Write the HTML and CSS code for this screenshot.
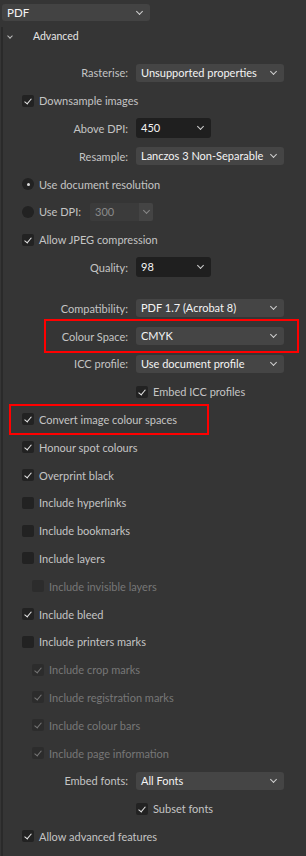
FILE: index.html
```html
<!DOCTYPE html>
<html>
<head>
  <meta charset="utf-8" />
  <title>PDF export - Advanced</title>
  <link rel="stylesheet" href="styles.css">
</head>
<body>
  <div class="top">
    <div class="select wide">PDF<span class="chev"></span></div>
  </div>

  <div class="panel">
    <div class="section-head"><span class="chev small"></span>Advanced</div>

    <div class="group">
      <div class="row field"><span class="label">Rasterise:</span><div class="select">Unsupported properties<span class="chev"></span></div></div>
      <div class="row check"><span class="box on"></span>Downsample images</div>
      <div class="row field"><span class="label">Above DPI:</span><div class="select dark">450<span class="chev"></span></div></div>
      <div class="row field"><span class="label">Resample:</span><div class="select">Lanczos 3 Non-Separable<span class="chev"></span></div></div>
      <div class="row check"><span class="radio on"></span>Use document resolution</div>
      <div class="row check"><span class="radio"></span>Use DPI:<div class="spin"><span class="spin-val">300</span><span class="spin-btn"><span class="chev"></span></span></div></div>
      <div class="row check"><span class="box on"></span>Allow JPEG compression</div>
      <div class="row field"><span class="label">Quality:</span><div class="select dark">98<span class="chev"></span></div></div>
    </div>

    <div class="group spaced">
      <div class="row field"><span class="label">Compatibility:</span><div class="select">PDF 1.7 (Acrobat 8)<span class="chev"></span></div></div>
      <div class="row field marked mark-space"><span class="label">Colour Space:</span><div class="select">CMYK<span class="chev"></span></div></div>
      <div class="row field"><span class="label">ICC profile:</span><div class="select">Use document profile<span class="chev"></span></div></div>
      <div class="row check sub-field"><span class="box on"></span>Embed ICC profiles</div>
      <div class="row check marked mark-convert"><span class="box on"></span>Convert image colour spaces</div>
      <div class="row check"><span class="box on"></span>Honour spot colours</div>
      <div class="row check"><span class="box on"></span>Overprint black</div>
      <div class="row check"><span class="box"></span>Include hyperlinks</div>
      <div class="row check"><span class="box"></span>Include bookmarks</div>
      <div class="row check"><span class="box"></span>Include layers</div>
      <div class="row check indent off"><span class="box"></span>Include invisible layers</div>
      <div class="row check"><span class="box on"></span>Include bleed</div>
      <div class="row check"><span class="box"></span>Include printers marks</div>
      <div class="row check indent off"><span class="box on"></span>Include crop marks</div>
      <div class="row check indent off"><span class="box on"></span>Include registration marks</div>
      <div class="row check indent off"><span class="box on"></span>Include colour bars</div>
      <div class="row check indent off"><span class="box on"></span>Include page information</div>
      <div class="row field"><span class="label">Embed fonts:</span><div class="select">All Fonts<span class="chev"></span></div></div>
      <div class="row check sub-field"><span class="box on"></span>Subset fonts</div>
      <div class="row check"><span class="box on"></span>Allow advanced features</div>
    </div>
  </div>
</body>
</html>
```

FILE: styles.css
```css
body {
  margin: 0;
  background-color: #353535;
  color: #c4c4c4;
  font-family: Lato, "Noto Sans", sans-serif;
  font-size: 11px;
  height: 856px;
  overflow: hidden;
}

.top {
  height: 26px;
  padding: 4px 0 0 2px;
  box-sizing: border-box;
}

.top .select {
  font-size: 11.5px;
}

.panel {
  border-left: 2px solid #2a2a2a;
  margin-left: 1px;
  height: 830px;
}

.section-head {
  height: 18px;
  display: flex;
  align-items: center;
  color: #e6e6e6;
  font-size: 10.5px;
  margin-top: 1px;
}

.section-head .chev {
  position: static;
  margin: 0 21px 0 5px;
}

.group {
  margin-top: 14px;
}

.group.spaced {
  margin-top: 13px;
}

.row {
  height: 27.8px;
  display: flex;
  align-items: center;
  position: relative;
}

.field .label {
  width: 125px;
  text-align: right;
  margin-right: 8px;
  flex-shrink: 0;
}

.check {
  padding-left: 19px;
}

.check.indent {
  padding-left: 29px;
}

.check.sub-field {
  padding-left: 133px;
}

.off {
  color: #777;
}

/* dropdowns */
.select {
  position: relative;
  width: 148px;
  height: 18px;
  line-height: 18px;
  box-sizing: border-box;
  padding-left: 5px;
  background-color: #454545;
  border-radius: 3px;
  color: #f4f4f4;
  white-space: nowrap;
}

.select.wide {
  height: 17px;
  line-height: 17px;
  background-color: #434343;
}

.select.dark {
  width: 75px;
  height: 20px;
  line-height: 20px;
  background-color: #1f1f1f;
}

.chev {
  position: absolute;
  right: 8px;
  top: 50%;
  width: 4px;
  height: 4px;
  margin-top: -4px;
  border-right: 1.2px solid #d0d0d0;
  border-bottom: 1.2px solid #d0d0d0;
  transform: rotate(45deg);
}

.chev.small {
  width: 3px;
  height: 3px;
  border-color: #bbb;
}

/* checkbox + radio */
.box, .radio {
  width: 12px;
  height: 12px;
  margin-right: 5px;
  flex-shrink: 0;
  background-color: #222;
  border-radius: 2px;
  position: relative;
}

.off .box {
  background-color: #2c2c2c;
}

.box.on::after {
  content: "";
  position: absolute;
  left: 4px;
  top: 2px;
  width: 3px;
  height: 6px;
  border-right: 1.2px solid #e8e8e8;
  border-bottom: 1.2px solid #e8e8e8;
  transform: rotate(40deg);
}

.off .box.on::after {
  border-color: #777;
}

.radio {
  border-radius: 50%;
}

.radio.on::after {
  content: "";
  position: absolute;
  left: 4.5px;
  top: 4.5px;
  width: 3px;
  height: 3px;
  border-radius: 50%;
  background-color: #ddd;
}

.spin {
  display: flex;
  margin-left: 9px;
  height: 18px;
}

.spin-val {
  width: 49px;
  background-color: #3b3b3b;
  color: #8a8a8a;
  line-height: 18px;
  padding-left: 5px;
  box-sizing: border-box;
  border-radius: 2px 0 0 2px;
}

.spin-btn {
  width: 14px;
  background-color: #444;
  position: relative;
  border-radius: 0 2px 2px 0;
}

.spin-btn .chev {
  right: 4px;
  border-color: #888;
}

/* red annotation frames */
.marked::after {
  content: "";
  position: absolute;
  border: 2px solid #ff0000;
  pointer-events: none;
}

.mark-space::after {
  left: 41px;
  right: 7px;
  top: -3px;
  bottom: -3px;
}

.mark-convert::after {
  left: 6px;
  width: 196px;
  top: -2px;
  bottom: -2px;
}
```
